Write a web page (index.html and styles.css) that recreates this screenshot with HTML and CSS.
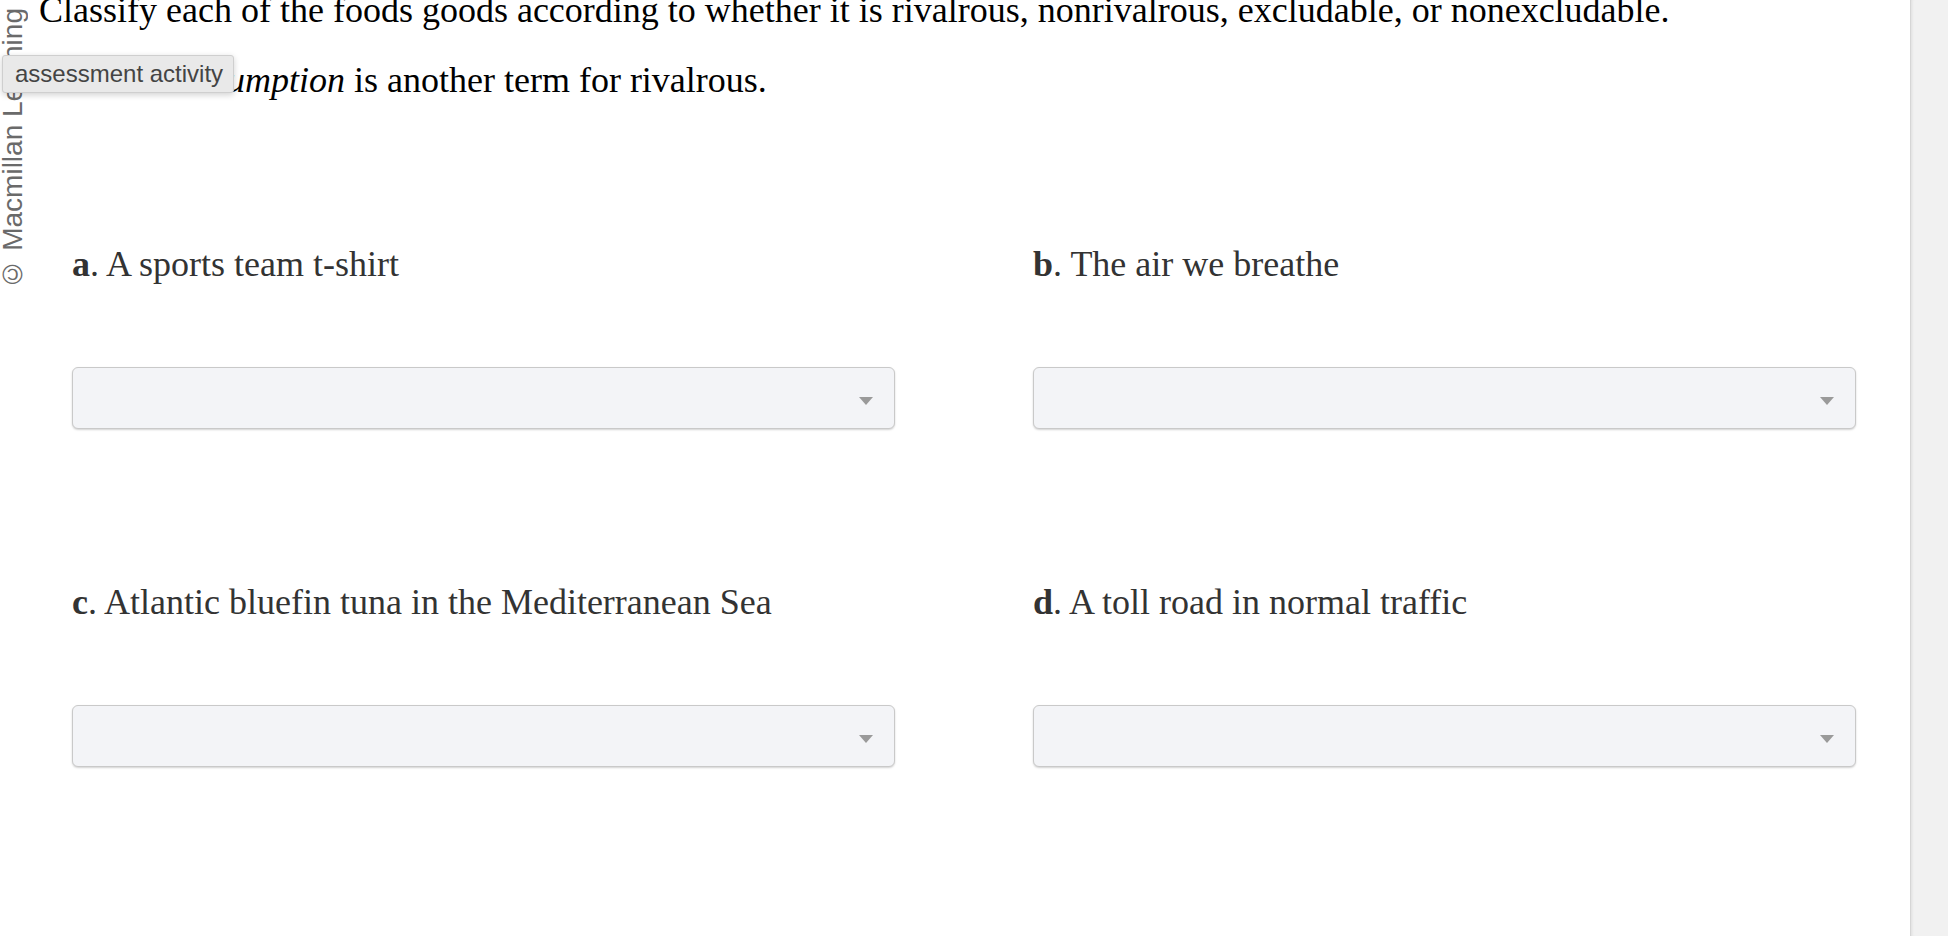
FILE: index.html
```html
<!DOCTYPE html>
<html lang="en">
<head>
<meta charset="utf-8">
<title>Assessment</title>
<link rel="stylesheet" href="styles.css">
</head>
<body>
<div class="frame">
  <main class="content">
    <div class="watermark">© Macmillan Learning</div>
    <div class="tooltip">assessment activity</div>
    <p class="prompt">Classify each of the foods goods according to whether it is rivalrous, nonrivalrous, excludable, or nonexcludable.</p>
    <p class="hint"><em>Rival in consumption</em> is another term for rivalrous.</p>
    <div class="questions">
      <div class="question">
        <div class="label"><b>a</b>. A sports team t-shirt</div>
        <div class="select"><svg class="caret" width="14" height="8" viewBox="0 0 14 8"><path d="M0 0H14L7 8Z" fill="#9a9a9a"/></svg></div>
      </div>
      <div class="question">
        <div class="label"><b>b</b>. The air we breathe</div>
        <div class="select"><svg class="caret" width="14" height="8" viewBox="0 0 14 8"><path d="M0 0H14L7 8Z" fill="#9a9a9a"/></svg></div>
      </div>
      <div class="question">
        <div class="label"><b>c</b>. Atlantic bluefin tuna in the Mediterranean Sea</div>
        <div class="select"><svg class="caret" width="14" height="8" viewBox="0 0 14 8"><path d="M0 0H14L7 8Z" fill="#9a9a9a"/></svg></div>
      </div>
      <div class="question">
        <div class="label"><b>d</b>. A toll road in normal traffic</div>
        <div class="select"><svg class="caret" width="14" height="8" viewBox="0 0 14 8"><path d="M0 0H14L7 8Z" fill="#9a9a9a"/></svg></div>
      </div>
    </div>
  </main>
  <aside class="track"></aside>
</div>
</body>
</html>
```

FILE: styles.css
```css
html, body {
  margin: 0;
  padding: 0;
  background: #fff;
  height: 100%;
  overflow: hidden;
}
.frame {
  display: flex;
  height: 936px;
}
.content {
  position: relative;
  flex: 1;
  font-family: "Liberation Serif", "Times New Roman", serif;
  font-size: 36px;
  line-height: 40px;
  color: #000;
  overflow: hidden;
}
.track {
  width: 37px;
  background: #f1f1f1;
  border-left: 1px solid #d6d6d6;
  box-shadow: inset 3px 0 3px -2px rgba(0,0,0,0.08);
}
.prompt {
  margin: -10px 0 0 0;
  padding-left: 39px;
}
.hint {
  margin: 30px 0 0 0;
  padding-left: 39px;
}
.questions {
  display: grid;
  grid-template-columns: 823px 823px;
  column-gap: 138px;
  row-gap: 153px;
  padding-left: 72px;
  margin-top: 144px;
}
.question {
  display: flex;
  flex-direction: column;
  gap: 83px;
}
.label {
  color: #333;
}
.label b {
  font-weight: bold;
}
.select {
  height: 60px;
  box-sizing: content-box;
  background: #f3f4f7;
  border: 1px solid #c9c9c9;
  border-radius: 6px;
  box-shadow: 0 1px 2px rgba(0,0,0,0.18);
  display: flex;
  align-items: center;
  justify-content: flex-end;
  padding-right: 21px;
}
.caret {
  display: block;
  margin-top: 6px;
}
.watermark {
  position: absolute;
  left: -1px;
  top: 8px;
  writing-mode: vertical-rl;
  transform: rotate(180deg);
  font-family: "Liberation Sans", Arial, sans-serif;
  font-size: 28px;
  line-height: 28px;
  color: #6a6a6a;
  white-space: nowrap;
}
.tooltip {
  position: absolute;
  left: 2px;
  top: 55px;
  z-index: 2;
  font-family: "Liberation Sans", Arial, sans-serif;
  font-size: 24px;
  line-height: 28px;
  color: #444;
  background: #e9e9e9;
  border: 1px solid #cfcfcf;
  border-radius: 3px;
  padding: 4px 10px 4px 12px;
  box-shadow: 0 2px 6px rgba(0,0,0,0.18);
  white-space: nowrap;
}
```
